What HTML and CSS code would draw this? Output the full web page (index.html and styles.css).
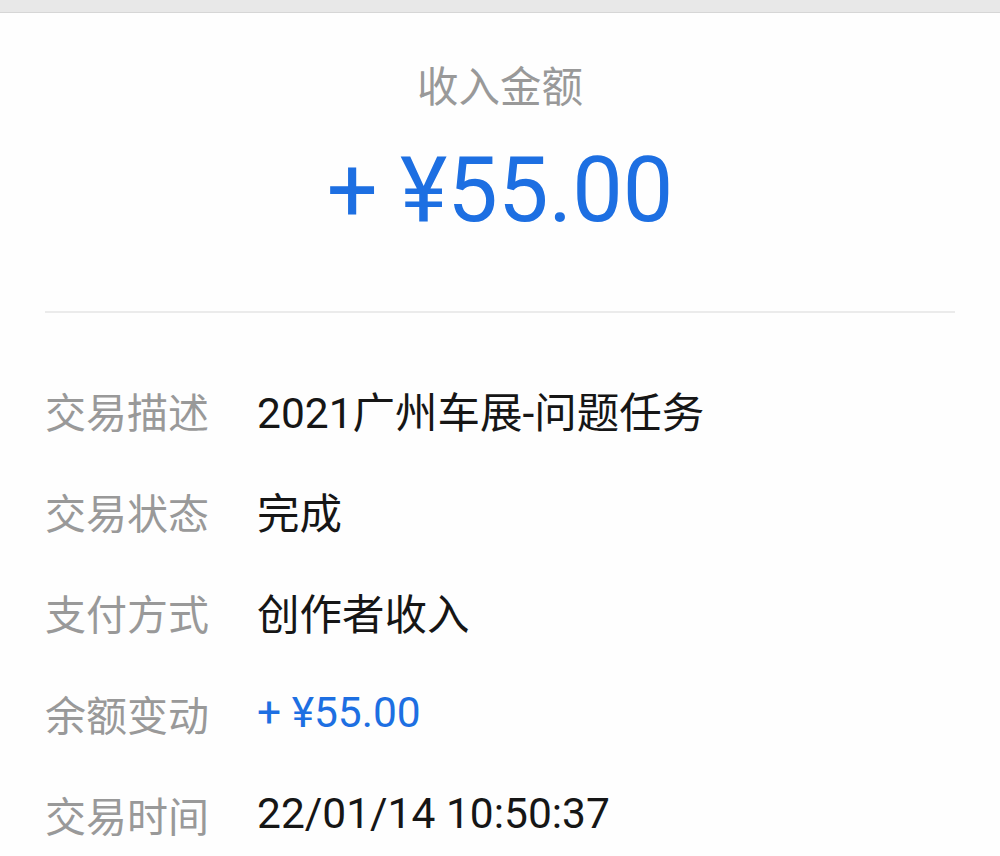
FILE: index.html
```html
<!DOCTYPE html>
<html lang="zh-CN">
<head>
<meta charset="utf-8">
<title>收入详情</title>
<link rel="stylesheet" href="styles.css">
</head>
<body>
<div class="topbar"></div>
<main class="page">
  <section class="summary">
    <div class="summary-title">收入金额</div>
    <div class="summary-amount">+ ¥55.00</div>
  </section>
  <div class="divider"></div>
  <section class="details">
    <div class="row"><span class="label">交易描述</span><span class="value">2021广州车展-问题任务</span></div>
    <div class="row"><span class="label">交易状态</span><span class="value">完成</span></div>
    <div class="row"><span class="label">支付方式</span><span class="value">创作者收入</span></div>
    <div class="row"><span class="label">余额变动</span><span class="value value-blue">+ ¥55.00</span></div>
    <div class="row"><span class="label">交易时间</span><span class="value">22/01/14 10:50:37</span></div>
  </section>
</main>
</body>
</html>
```

FILE: styles.css
```css
html, body {
  margin: 0;
  padding: 0;
  background: #fefefe;
}
body {
  font-family: Roboto, "Noto Sans CJK SC", "Noto Sans", sans-serif;
  width: 1000px;
  height: 856px;
  overflow: hidden;
}
.topbar {
  height: 12px;
  background: #e8e8e8;
  border-bottom: 1px solid #d6d6d6;
}
.page {
  padding: 0 45px;
}
.summary {
  display: flex;
  flex-direction: column;
  align-items: center;
  padding-top: 50px;
}
.summary-title {
  font-size: 41.5px;
  line-height: 50px;
  color: #999999;
}
.summary-amount {
  margin-top: 28px;
  font-size: 90px;
  line-height: 100px;
  color: #1d6fe2;
}
.divider {
  margin-top: 70px;
  height: 2px;
  background: #ebebeb;
}
.details {
  padding-top: 46px;
}
.row {
  display: flex;
  align-items: center;
  height: 101px;
}
.label {
  width: 212px;
  flex: none;
  font-size: 41px;
  color: #999999;
}
.value {
  font-size: 42.5px;
  color: #161616;
}
.value-blue {
  color: #1d6fe2;
}
```
